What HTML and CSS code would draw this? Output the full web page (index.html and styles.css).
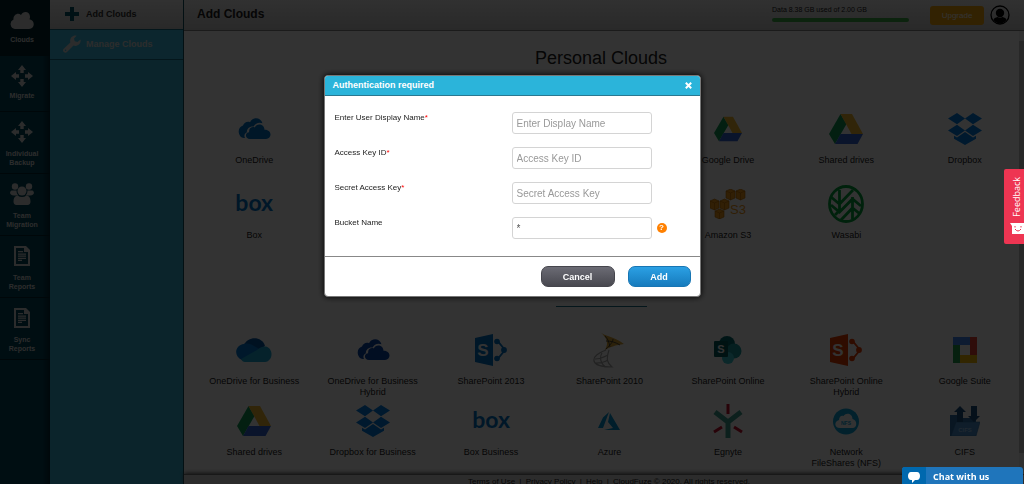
FILE: index.html
```html
<!DOCTYPE html>
<html lang="en">
<head>
  <meta charset="UTF-8">
  <meta name="viewport" content="width=device-width, initial-scale=1.0">
  <title>Add Clouds</title>
  <link rel="stylesheet" href="styles.css">
</head>
<body>
  <!-- Shared icons -->
  <svg class="sprite" width="0" height="0" aria-hidden="true">
    <symbol id="i-arrows" viewBox="0 0 22 22">
      <path d="M11 0l4 5h-2.300v3H9.300V5H7zM11 22l4-5h-2.300v-3H9.300v3H7zM0 11l5-4v2.300h3v3.400H5V15zM22 11l-5-4v2.300h-3v3.400h3V15z"/>
    </symbol>
    <symbol id="i-report" viewBox="0 0 16 20">
      <path fill-rule="evenodd" d="M0 0h12l4 4v16H0zM2 2v16h12V6h-4V2z"/>
      <path d="M4 5h5v1.300H4zM4 7.500h8v1.200H4zM4 9.600h8v1.200H4zM4 11.700h8v1.200H4zM4 13.800h4v1.200H4z"/>
    </symbol>
    <symbol id="i-onedrive" viewBox="0 0 34 22">
      <path d="M7 20a6.500 6.500 0 0 1-1-12.500C7 4.500 10.500 3 13 4.200 15.500-1 23.500-1.200 25.500 5.200c-4-1.500-7.500.3-8.800 3.300C12.500 7.800 9.500 11 9.900 14.300 7.500 15.500 6.800 17.800 8 20z"/>
      <path d="M13 21c-5.500-.6-5-6.500-.8-6.800-.8-4 3.200-6 5.600-4.700 1.700-4.600 9.500-3.900 9.700 2.200 7.500-.2 8 8.700 1.500 9.300z"/>
    </symbol>
    <symbol id="i-drive" viewBox="0 0 34 30">
      <path fill="#0f9d58" d="M11.500 0L0 20l6 10 11.500-20z"/>
      <path fill="#f4b92e" d="M11.500 0h11.500l11 20H22.500z"/>
      <path fill="#3366d6" d="M11.500 20H34l-5.500 10H6z"/>
    </symbol>
    <symbol id="i-dropbox" viewBox="0 0 34 32">
      <path d="M9 0l8 5.500-8 5.700L0 5.600zM25 0l9 5.600-9 5.600-8-5.700zM0 17.500l9-5.800 8 5.700L9 23zM25 11.700l9 5.800-9 5.500-8-5.600zM17 19l8 5.500 3-1.800v3L17 32 6 25.700v-3l3 1.800z"/>
    </symbol>
    <symbol id="i-sharepoint" viewBox="0 0 32 32">
      <path d="M0 4l18-4v32L0 28z"/>
      <path fill="none" stroke="currentColor" stroke-width="1.800" d="M20 7.500h3l7 8.500-7 8.500h-3"/>
      <circle cx="22" cy="7.500" r="2.800"/><circle cx="29" cy="16" r="2.900"/><circle cx="22" cy="24.500" r="2.800"/>
    </symbol>
  </svg>

  <div class="app">
    <nav class="sidebar">
      <a class="side-link active" href="#">
        <svg width="24" height="22" viewBox="0 0 24 20"><path d="M5 19a5 5 0 0 1-1.500-9.500C3 5 8 2 11 5c2-4.500 9.500-4 9 2.500-.2 1-.3 1.200-.6 1.800C25.500 10.500 25 18.500 19 19z"/></svg>
        <span>Clouds</span>
      </a>
      <a class="side-link" href="#">
        <svg width="22" height="22"><use href="#i-arrows"/></svg>
        <span>Migrate</span>
      </a>
      <a class="side-link tall" href="#">
        <svg width="22" height="22"><use href="#i-arrows"/></svg>
        <span>Individual Backup</span>
      </a>
      <a class="side-link tall" href="#">
        <svg width="24" height="22" viewBox="0 0 24 22">
          <circle cx="5" cy="3.500" r="3.200"/><circle cx="19" cy="3.500" r="3.200"/>
          <path d="M1.500 7.500h5c0 2 .7 4 2 5H4c-5 0-4.500-4-2.500-5zM22.500 7.500h-5c0 2-.7 4-2 5H20c5 0 4.500-4 2.500-5z"/>
          <circle cx="12" cy="8" r="4.500"/>
          <path d="M7.500 12.500c3 2 6 2 9 0 3 .5 4 3 4 6 0 2-1 3.500-3 3.500h-11c-2 0-3-1.500-3-3.500 0-3 1-5.500 4-6z"/>
        </svg>
        <span>Team Migration</span>
      </a>
      <a class="side-link tall" href="#">
        <svg width="22" height="22" viewBox="0 0 22 22"><use href="#i-report" x="3" y="1" width="16" height="20"/></svg>
        <span>Team Reports</span>
      </a>
      <a class="side-link tall" href="#">
        <svg width="22" height="22" viewBox="0 0 22 22"><use href="#i-report" x="3" y="1" width="16" height="20"/></svg>
        <span>Sync Reports</span>
      </a>
    </nav>

    <nav class="subnav">
      <a class="sub-link selected" href="#">
        <svg width="16" height="16" viewBox="0 0 16 16"><path d="M6 1h4v5h5v4h-5v5H6v-5H1V6h5z"/></svg>
        Add Clouds
      </a>
      <a class="sub-link" href="#">
        <svg width="18" height="18" viewBox="0 0 18 18"><path fill-rule="evenodd" d="M17.500 4.500a5.200 5.200 0 0 1-7 6L4 17a2.200 2.200 0 0 1-3.200-3.200L7.400 7.500c-1.200-4 2-7.500 6.100-6.800L11 3.500l.7 2.800 2.800.7zM2.500 14.500a.8.8 0 1 0 .1 1.600.8.8 0 0 0-.1-1.600z"/></svg>
        Manage Clouds
      </a>
    </nav>

    <main class="main">
      <header class="topbar">
        <h1>Add Clouds</h1>
        <div class="usage">
          <span>Data 8.38 GB used of 2.00 GB</span>
          <div class="usage-bar"></div>
        </div>
        <button class="upgrade" type="button">Upgrade</button>
        <svg class="avatar" width="20" height="20" viewBox="0 0 20 20">
          <circle cx="10" cy="10" r="9" fill="none" stroke="#000" stroke-width="1.300"/>
          <circle cx="10" cy="8" r="4.200"/>
          <path d="M3.500 15c.5-2 2-2.500 4-3q2.500 1.500 5 0c2 .5 3.500 1 4 3-3 4.500-10 4.500-13 0z"/>
        </svg>
      </header>

      <div class="content">
        <h2>Personal Clouds</h2>
        <section class="clouds">
          <div class="cloud">
            <div class="icon blue"><svg width="34" height="22"><use href="#i-onedrive"/></svg></div>
            <span>OneDrive</span>
          </div>
          <div class="cloud after-gap">
            <div class="icon"><svg width="28" height="26"><use href="#i-drive"/></svg></div>
            <span>Google Drive</span>
          </div>
          <div class="cloud">
            <div class="icon"><svg width="34" height="30"><use href="#i-drive"/></svg></div>
            <span>Shared drives</span>
          </div>
          <div class="cloud">
            <div class="icon dropbox"><svg width="34" height="32"><use href="#i-dropbox"/></svg></div>
            <span>Dropbox</span>
          </div>
          <div class="cloud">
            <div class="icon box">box</div>
            <span>Box</span>
          </div>
          <div class="cloud after-gap">
            <div class="icon amazon">
              <svg width="36" height="30" viewBox="0 0 36 30">
                <g stroke="#b56a00" stroke-width=".6">
                  <path d="M16 2l4.500-2L25 2v7l-4.500 2L16 9zM26 2l4.500-2L35 2v7l-4.500 2L26 9zM0 12l4.500-2L9 12v7l-4.500 2L0 19zM10 12l4.500-2 4.500 2v7l-4.500 2-4.500-2zM5 22l4.500-2 4.500 2v6l-4.500 2L5 28z"/>
                  <path fill="none" d="M16 2l4.500 2L25 2M20.500 4v7M26 2l4.500 2L35 2M30.500 4v7M0 12l4.500 2L9 12M4.500 14v7M10 12l4.500 2 4.500-2M14.500 14v7M5 22l4.500 2 4.500-2M9.500 24v6"/>
                </g>
                <text x="20" y="25">S3</text>
              </svg>
            </div>
            <span>Amazon S3</span>
          </div>
          <div class="cloud">
            <div class="icon">
              <svg width="36" height="38" viewBox="0 0 36 38" fill="none" stroke="#00a63c" stroke-width="2.800">
                <ellipse cx="18" cy="19" rx="16.500" ry="17.500"/>
                <path d="M11.500 5v21M24.500 12v22M3 12l8.500 7L25 5M3 20l8.500 7 13-13 8.500 7M7 30l4-4M13 35l11.500-12L32 29"/>
              </svg>
            </div>
            <span>Wasabi</span>
          </div>
        </section>

        <hr class="divider">

        <section class="clouds">
          <div class="cloud">
            <div class="icon">
              <svg width="36" height="24" viewBox="0 0 36 24">
                <path fill="#0358a7" d="M8 7C12-2 26-2 29 8l-10 7z"/>
                <path fill="#0078d4" d="M8 6c4-1 7 0 10 2l7 4-19 10C-3 18-1 7 8 6z"/>
                <path fill="#19a9d8" d="M5 21l16-9c3-3 7-4 9-3.500C38 11 37 23 29 24H9c-2 0-3-1-4-3z"/>
              </svg>
            </div>
            <span>OneDrive for Business</span>
          </div>
          <div class="cloud">
            <div class="icon navy"><svg width="34" height="22"><use href="#i-onedrive"/></svg></div>
            <span>OneDrive for Business Hybrid</span>
          </div>
          <div class="cloud">
            <div class="icon share-blue">
              <svg width="32" height="32"><use href="#i-sharepoint"/><text x="8" y="22" text-anchor="middle">S</text></svg>
            </div>
            <span>SharePoint 2013</span>
          </div>
          <div class="cloud">
            <div class="icon">
              <svg width="32" height="36" viewBox="0 0 32 36">
                <path fill="#d9a536" d="M7 0c4 4 13 4 24 12-8 1-15 3-20 7 5-6 4-13-4-19z"/>
                <path fill="none" stroke="#333" stroke-width=".8" d="M12 4c3 3 4 6 5 11M20 7c0 3-3 6-7 10M13 9c5 0 9 1 14 4"/>
                <path fill="none" stroke="#aaa" stroke-width="1.200" d="M13 18c-7 3-13 6-12 11 1 4 9 6 18 6-5-4-6-8-3-17M2 27c6 0 9-2 13-4M3 31c5 0 9-1 12-3M9 21c-3 5-1 10 3 14"/>
              </svg>
            </div>
            <span>SharePoint 2010</span>
          </div>
          <div class="cloud">
            <div class="icon spo">
              <svg width="28" height="28" viewBox="0 0 28 28">
                <circle cx="13" cy="8" r="8" fill="#036c70"/>
                <circle cx="20" cy="15" r="7.500" fill="#1a9ba1"/>
                <circle cx="14" cy="22" r="6" fill="#37c6d0"/>
                <rect y="5" width="14" height="16" rx="1" fill="#03595c"/>
                <text x="7" y="17" text-anchor="middle">S</text>
              </svg>
            </div>
            <span>SharePoint Online</span>
          </div>
          <div class="cloud">
            <div class="icon share-red">
              <svg width="32" height="32"><use href="#i-sharepoint"/><text x="8" y="22" text-anchor="middle">S</text></svg>
            </div>
            <span>SharePoint Online Hybrid</span>
          </div>
          <div class="cloud">
            <div class="icon">
              <svg width="24" height="26" viewBox="0 0 24 26">
                <path fill="#4285f4" d="M0 0h17v8H0z"/><path fill="#ea4335" d="M17 0h7v18h-7z"/>
                <path fill="#fbbc05" d="M7 18h17v8H7z"/><path fill="#1ea04d" d="M0 8h7v18H0z"/>
                <path fill="#fff" d="M7 8h10v10H7z"/>
              </svg>
            </div>
            <span>Google Suite</span>
          </div>
          <div class="cloud">
            <div class="icon"><svg width="34" height="30"><use href="#i-drive"/></svg></div>
            <span>Shared drives</span>
          </div>
          <div class="cloud">
            <div class="icon dropbox"><svg width="34" height="32"><use href="#i-dropbox"/></svg></div>
            <span>Dropbox for Business</span>
          </div>
          <div class="cloud">
            <div class="icon box">box</div>
            <span>Box Business</span>
          </div>
          <div class="cloud">
            <div class="icon">
              <svg width="22" height="18" viewBox="0 0 22 18" fill="#0095d5"><path d="M11 0L5 5.500 0 16h5zM12 1l10 17H6l9-2-5-6z"/></svg>
            </div>
            <span>Azure</span>
          </div>
          <div class="cloud">
            <div class="icon">
              <svg width="30" height="34" viewBox="0 0 30 34" fill="none">
                <path stroke="#3fa08f" stroke-width="5" d="M15 34V17M2 8l13 10L28 8"/>
                <path stroke="#c8102e" stroke-width="3" d="M15 0v10M1 28l8-5M29 28l-8-5"/>
              </svg>
            </div>
            <span>Egnyte</span>
          </div>
          <div class="cloud">
            <div class="icon nfs">
              <svg width="26" height="27" viewBox="0 0 26 27">
                <circle cx="13" cy="13.500" r="13" fill="#0aa5dc"/>
                <path fill="#fff" d="M7 20c-6 0-6-7-1-8 0-4 3-5 4.500-4 3-4 9-2 9 3 5 1 5 9 0 9z"/>
                <text x="13" y="17" text-anchor="middle">NFS</text>
              </svg>
            </div>
            <span>Network<br>FileShares (NFS)</span>
          </div>
          <div class="cloud">
            <div class="icon cifs">
              <svg width="30" height="30" viewBox="0 0 30 30">
                <path fill="#2d6ea8" d="M0 9h8l2 3h16v6L4 30H0z"/>
                <path fill="#4a90cf" stroke="#2d6ea8" stroke-width=".6" d="M6 16h24l-4 14H1z"/>
                <path fill="#1c4f80" d="M10 0l6 6h-3v10H7V6H4zM24 16l-6-6h3V0h6v10h3z"/>
                <text x="15" y="26" text-anchor="middle">CIFS</text>
              </svg>
            </div>
            <span>CIFS</span>
          </div>
        </section>
        <div class="scrollbar"></div>
      </div>

      <footer class="footer">
        <a href="#">Terms of Use</a> | <a href="#">Privacy Policy</a> | <a href="#">Help</a> |
        <span>CloudFuze © 2020. All rights reserved.</span>
      </footer>
    </main>
  </div>

  <!-- Credentials dialog -->
  <div class="backdrop">
    <form class="modal" role="dialog" aria-labelledby="modal-title">
      <div class="modal-header">
        <h3 id="modal-title">Authentication required</h3>
        <button class="close" type="button" aria-label="Close">
          <svg width="7" height="7" viewBox="0 0 7 7"><path stroke="#fff" stroke-width="2" d="M.8.8l5.400 5.400M6.200.8L.8 6.200"/></svg>
        </button>
      </div>
      <div class="modal-body">
        <div class="field">
          <label for="displayName">Enter User Display Name<em>*</em></label>
          <input type="text" id="displayName" placeholder="Enter Display Name">
        </div>
        <div class="field">
          <label for="accessKey">Access Key ID<em>*</em></label>
          <input type="text" id="accessKey" placeholder="Access Key ID">
        </div>
        <div class="field">
          <label for="secretKey">Secret Access Key<em>*</em></label>
          <input type="text" id="secretKey" placeholder="Secret Access Key">
        </div>
        <div class="field">
          <label for="bucket">Bucket Name</label>
          <input type="text" id="bucket" value="*">
          <span class="help">?</span>
        </div>
      </div>
      <div class="modal-footer">
        <button class="btn cancel" type="button">Cancel</button>
        <button class="btn add" type="button">Add</button>
      </div>
    </form>
  </div>

  <button class="feedback" type="button">
    <span>Feedback</span>
    <svg width="14" height="12" viewBox="0 0 14 12">
      <path fill="#fff" d="M0 0h14v11H2V3z"/>
      <path fill="none" stroke="#ee3552" d="M5 6q3 4 6 0M5 3v1.500M11 3v1.500"/>
    </svg>
  </button>

  <button class="chat" type="button">
    <span class="chat-icon">
      <svg width="12" height="11" viewBox="0 0 12 11"><path fill="#fff" d="M3 0h6c4 0 4 8 0 8H7l-3 3V8H3C-1 8-1 0 3 0z"/></svg>
    </span>
    <span class="chat-text">Chat with us</span>
  </button>
</body>
</html>
```
FILE: styles.css
```css
* {
  box-sizing: border-box;
}
body {
  margin: 0;
  font-family: "Liberation Sans", Arial, sans-serif;
  font-size: 9px;
  color: #222;
  overflow: hidden;
}
a {
  color: inherit;
  text-decoration: none;
}
button {
  border: 0;
  padding: 0;
  font-family: inherit;
  cursor: pointer;
}
h1, h2, h3 {
  margin: 0;
}
.sprite {
  position: absolute;
}
.app {
  display: flex;
  height: 100vh;
}

/* left navigation */
.sidebar {
  width: 50px;
  flex: none;
  background: linear-gradient(to right, #00465a 85%, #002a38);
}
.side-link {
  display: flex;
  flex-direction: column;
  align-items: center;
  gap: 4px;
  height: 56px;
  padding: 9px 6px 0 0;
  border-bottom: 1px solid #00242e;
  color: #ddd;
  fill: #ddd;
  font-size: 7px;
  font-weight: bold;
  line-height: 9px;
  text-align: center;
}
.side-link svg {
  flex: none;
}
.side-link.active {
  background: #002630;
}
.side-link.tall {
  height: 62px;
  gap: 6px;
}

/* second navigation */
.subnav {
  width: 134px;
  flex: none;
  background: #37b4d7;
  border-right: 1px solid #10505f;
}
.sub-link {
  display: flex;
  align-items: center;
  gap: 5px;
  height: 30px;
  padding: 0 0 2px 13px;
  border-bottom: 1px solid #176d85;
  background: #3dbfe4;
  color: #ddd;
  fill: #ddd;
  font-weight: bold;
}
.sub-link.selected {
  gap: 6px;
  padding-left: 14px;
  background: linear-gradient(#f4f4f4, #ccc);
  color: #333;
  fill: #00586c;
}

/* main column */
.main {
  flex: 1;
  min-width: 0;
  display: flex;
  flex-direction: column;
  background: #fff;
}
.topbar {
  flex: none;
  display: flex;
  align-items: center;
  height: 31px;
  padding: 0 14px 0 13px;
  background: linear-gradient(#f2f2f2, #ccc);
  border-bottom: 1px solid #888;
}
.topbar h1 {
  flex: 1;
  padding-bottom: 3px;
  font-size: 12px;
}
.usage {
  width: 137px;
  padding-bottom: 4px;
  font-size: 7px;
  line-height: 10px;
}
.usage-bar {
  height: 4px;
  margin-top: 3px;
  border-radius: 2px;
  background: #3fae49;
}
.upgrade {
  width: 54px;
  height: 19px;
  margin: 0 6px 0 21px;
  border-radius: 3px;
  background: #f9a80c;
  color: #fff;
  font-size: 8px;
}
.content {
  position: relative;
  flex: 1;
  min-height: 0;
  overflow: hidden;
}
.content h2 {
  padding: 15px 6px 41px 0;
  font-size: 18px;
  font-weight: normal;
  line-height: 24px;
  text-align: center;
}
.clouds {
  display: grid;
  grid-template-columns: repeat(7, 1fr);
  row-gap: 20px;
  padding-left: 11px;
}
.divider {
  width: 91px;
  height: 1px;
  margin: 65px 0 25px 372px;
  border: 0;
  background: #176d85;
}
.divider + .clouds {
  row-gap: 5px;
}
.cloud {
  display: flex;
  flex-direction: column;
  align-items: center;
  gap: 8px;
  padding: 0 10px;
  line-height: 11px;
  text-align: center;
}
.cloud.after-gap {
  grid-column: 5;
}
.icon {
  display: flex;
  align-items: center;
  justify-content: center;
  height: 36px;
}
.icon text {
  fill: #fff;
  font-weight: bold;
}
.blue { fill: #0072c6; }
.navy { fill: #0846a8; }
.dropbox { fill: #007ee5; }
.share-blue { color: #0072c6; fill: #0072c6; }
.share-red { color: #eb3c00; fill: #eb3c00; }
.share-blue text, .share-red text { font-size: 17px; }
.amazon { fill: #f59b1a; }
.amazon text {
  fill: #f59b1a;
  font-size: 13px;
  font-weight: normal;
}
.box {
  padding-bottom: 4px;
  color: #0075c9;
  font-family: Lato, sans-serif;
  font-size: 23px;
  font-weight: bold;
}
.spo text { font-size: 11px; }
.icon.nfs text { fill: #0aa5dc; font-size: 5px; }
.icon.cifs text { fill: #9cc8ee; font-size: 6px; }
.scrollbar {
  position: absolute;
  top: 0;
  right: 0;
  bottom: 0;
  width: 5px;
  border: solid #f1f1f1;
  border-width: 10px 0 21px;
  background: #c1c1c1;
}
.footer {
  flex: none;
  height: 10px;
  padding: 1px 0 0 8px;
  border-top: 1px solid #777;
  background: #ddd;
  box-shadow: 0 -1px 4px #555;
  font-size: 8px;
  line-height: 12px;
  text-align: center;
  white-space: nowrap;
}
.footer a {
  margin: 0 2px;
}
.footer span {
  margin-left: 2px;
}

/* dialog */
.backdrop {
  position: fixed;
  inset: 0;
  display: flex;
  align-items: flex-start;
  justify-content: center;
  padding-top: 75px;
  background: rgba(0, 0, 0, 0.8);
}
.modal {
  width: 377px;
  border: 1px solid #777;
  border-radius: 4px;
  background: #fff;
  box-shadow: 0 0 6px #000;
  overflow: hidden;
}
.modal-header {
  display: flex;
  align-items: center;
  justify-content: space-between;
  height: 20px;
  padding: 0 8px;
  border-bottom: 1px solid #2a7890;
  background: #2bb4da;
  color: #fff;
}
.modal-header h3 {
  padding-bottom: 1px;
  font-size: 9px;
}
.close {
  display: flex;
  background: none;
}
.modal-body {
  display: flex;
  flex-direction: column;
  gap: 13px;
  padding: 16px 10px 17px;
}
.field {
  display: flex;
}
.field label {
  width: 177px;
  line-height: 12px;
  font-size: 8px;
}
.field em {
  color: #f00;
  font-style: normal;
}
.field input {
  width: 140px;
  height: 22px;
  padding: 0 4px;
  border: 1px solid #d4d4d4;
  border-radius: 3px;
  background: #fff;
  color: #555;
  font-family: inherit;
  font-size: 10px;
}
.field input::placeholder {
  color: #999;
}
.help {
  align-self: center;
  width: 10px;
  height: 10px;
  margin-left: 5px;
  border-radius: 50%;
  background: #ff8000;
  color: #fff;
  font-size: 8px;
  font-weight: bold;
  line-height: 10px;
  text-align: center;
}
.modal-footer {
  display: flex;
  justify-content: flex-end;
  gap: 13px;
  padding: 9px;
  border-top: 1px solid #888;
}
.btn {
  height: 21px;
  border-radius: 7px;
  color: #fff;
  font-size: 9px;
  font-weight: bold;
}
.cancel {
  width: 74px;
  border: 1px solid #45454c;
  background: linear-gradient(#6b6b74, #48484f);
}
.add {
  width: 63px;
  border: 1px solid #1775b3;
  background: linear-gradient(#2ba0e4, #167bbd);
}

/* floating widgets */
.feedback {
  position: fixed;
  top: 169px;
  right: 0;
  display: flex;
  flex-direction: column;
  align-items: flex-end;
  justify-content: space-between;
  width: 20px;
  height: 75px;
  padding: 8px 0 9px;
  border-radius: 2px 0 0 2px;
  background: #ee3552;
  color: #fff;
  font-family: "Open Sans", sans-serif;
  font-size: 9px;
}
.feedback span {
  width: 14px;
  line-height: 14px;
  writing-mode: vertical-rl;
  transform: rotate(180deg);
}
.chat {
  position: fixed;
  right: 1px;
  bottom: 0;
  display: flex;
  width: 121px;
  height: 17px;
  border-radius: 3px 3px 0 0;
  background: #1f75bb;
  color: #fff;
  font-family: "Open Sans", sans-serif;
  font-size: 9px;
  font-weight: bold;
  line-height: 20px;
  overflow: hidden;
}
.chat-icon {
  display: flex;
  align-items: center;
  justify-content: center;
  width: 24px;
  height: 20px;
  background: #0068ae;
}
.chat-text {
  padding-left: 7px;
}
```
